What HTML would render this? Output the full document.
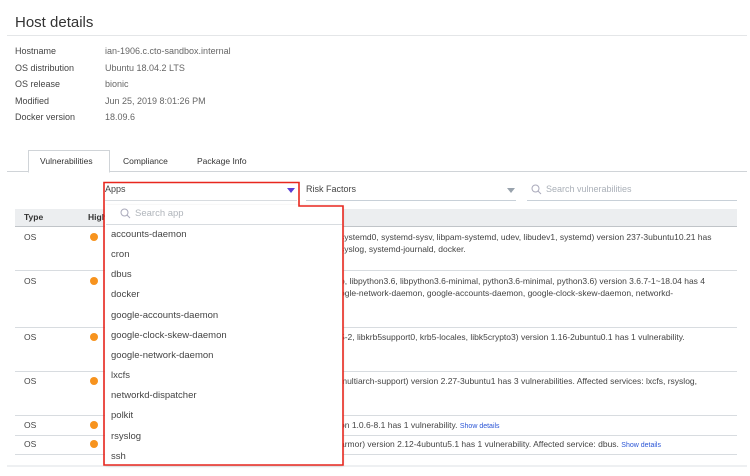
<!DOCTYPE html>
<html><head><meta charset="utf-8"><style>
body{margin:0;width:750px;height:476px;background:#fff;position:relative;overflow:hidden;font-family:"Liberation Sans",sans-serif;color:#444}
.a{position:absolute;white-space:nowrap;line-height:1}
.s{font-size:8.5px}
.d{font-size:9px}
.l{position:absolute;height:1px;background:#d8dce0}
.dot{position:absolute;width:8px;height:8px;border-radius:50%;background:#f7931e}
.it{position:absolute;left:111px;font-size:9.5px;color:#444;white-space:nowrap;line-height:1}
.sd{color:#2a55d6;font-size:7px}
</style></head><body>
<div class="a" style="left:15px;top:15px;font-size:15px;color:#333">Host details</div>
<div class="l" style="left:7px;top:35px;width:740px;background:#e4e6e8"></div>
<div class="a d" style="left:15px;top:47px">Hostname</div><div class="a d" style="left:105px;top:47px;color:#666">ian-1906.c.cto-sandbox.internal</div>
<div class="a d" style="left:15px;top:64px">OS distribution</div><div class="a d" style="left:105px;top:64px;color:#666">Ubuntu 18.04.2 LTS</div>
<div class="a d" style="left:15px;top:80px">OS release</div><div class="a d" style="left:105px;top:80px;color:#666">bionic</div>
<div class="a d" style="left:15px;top:97px">Modified</div><div class="a d" style="left:105px;top:97px;color:#666">Jun 25, 2019 8:01:26 PM</div>
<div class="a d" style="left:15px;top:113px">Docker version</div><div class="a d" style="left:105px;top:113px;color:#666">18.09.6</div>

<div class="l" style="left:7px;top:171px;width:740px;background:#d0d4d8"></div>
<div style="position:absolute;left:28px;top:150px;width:80px;height:21px;border:1px solid #d0d4d8;border-bottom:1px solid #fff;background:#fff"></div>
<div class="a" style="left:40px;top:157px;font-size:8.5px;color:#333">Vulnerabilities</div>
<div class="a" style="left:123px;top:157px;font-size:8.5px;color:#333">Compliance</div>
<div class="a" style="left:197px;top:157px;font-size:8.5px;color:#333">Package Info</div>

<div class="a" style="left:105px;top:185px;font-size:9px;color:#444">Apps</div>
<div class="l" style="left:105px;top:200px;width:192px"></div>
<svg style="position:absolute;left:286px;top:187px" width="10" height="7"><path d="M1 1h8L5 6z" fill="#5b3fd6"/></svg>
<div class="a" style="left:306px;top:185px;font-size:9px;color:#444">Risk Factors</div>
<div class="l" style="left:306px;top:200px;width:210px;background:#c8d0d8"></div>
<svg style="position:absolute;left:506px;top:187px" width="10" height="7"><path d="M1 1h8L5 6z" fill="#99a3ad"/></svg>
<svg style="position:absolute;left:531px;top:184px" width="11" height="11"><circle cx="4.5" cy="4.5" r="3.5" fill="none" stroke="#aab" stroke-width="1"/><path d="M7 7l3 3" stroke="#aab"/></svg>
<div class="a" style="left:546px;top:185px;font-size:9px;color:#aab0b8">Search vulnerabilities</div>
<div class="l" style="left:527px;top:200px;width:210px;background:#c8d0d8"></div>

<div style="position:absolute;left:15px;top:209px;width:722px;height:17px;background:#eceef0;border-bottom:1px solid #c0c4c8"></div>
<div class="a" style="left:24px;top:213px;font-size:8.5px;color:#333;font-weight:bold">Type</div>
<div class="a" style="left:88px;top:213px;font-size:8.5px;color:#333;font-weight:bold">High</div>

<div class="a s" style="left:24px;top:233px">OS</div><div class="dot" style="left:90px;top:233px"></div>
<div class="a s" style="left:340px;top:233px">systemd0, systemd-sysv, libpam-systemd, udev, libudev1, systemd) version 237-3ubuntu10.21 has</div>
<div class="a s" style="left:340px;top:245px">syslog, systemd-journald, docker.</div>
<div class="l" style="left:15px;top:270px;width:722px"></div>
<div class="a s" style="left:24px;top:277px">OS</div><div class="dot" style="left:90px;top:277px"></div>
<div class="a s" style="left:340px;top:277px">p, libpython3.6, libpython3.6-minimal, python3.6-minimal, python3.6) version 3.6.7-1~18.04 has 4</div>
<div class="a s" style="left:340px;top:289px">ogle-network-daemon, google-accounts-daemon, google-clock-skew-daemon, networkd-</div>
<div class="l" style="left:15px;top:327px;width:722px"></div>
<div class="a s" style="left:24px;top:333px">OS</div><div class="dot" style="left:90px;top:333px"></div>
<div class="a s" style="left:340px;top:333px">5-2, libkrb5support0, krb5-locales, libk5crypto3) version 1.16-2ubuntu0.1 has 1 vulnerability.</div>
<div class="l" style="left:15px;top:371px;width:722px"></div>
<div class="a s" style="left:24px;top:377px">OS</div><div class="dot" style="left:90px;top:377px"></div>
<div class="a s" style="left:340px;top:377px">multiarch-support) version 2.27-3ubuntu1 has 3 vulnerabilities. Affected services: lxcfs, rsyslog,</div>
<div class="l" style="left:15px;top:415px;width:722px"></div>
<div class="a s" style="left:24px;top:421px">OS</div><div class="dot" style="left:90px;top:421px"></div>
<div class="a s" style="left:340px;top:421px">on 1.0.6-8.1 has 1 vulnerability. <span class="sd">Show details</span></div>
<div class="l" style="left:15px;top:435px;width:722px"></div>
<div class="a s" style="left:24px;top:440px">OS</div><div class="dot" style="left:90px;top:440px"></div>
<div class="a s" style="left:340px;top:440px">armor) version 2.12-4ubuntu5.1 has 1 vulnerability. Affected service: dbus. <span class="sd">Show details</span></div>
<div class="l" style="left:15px;top:454px;width:722px"></div>
<div class="l" style="left:7px;top:465px;width:740px;height:2px;background:#eef0f2"></div>

<div style="position:absolute;left:105px;top:205px;width:238px;height:260px;background:#fff;box-shadow:0 1px 3px rgba(0,0,0,.15)"></div>
<svg style="position:absolute;left:120px;top:208px" width="11" height="11"><circle cx="4.5" cy="4.5" r="3.5" fill="none" stroke="#aab" stroke-width="1"/><path d="M7 7l3 3" stroke="#aab"/></svg>
<div class="a" style="left:135px;top:209px;font-size:9.5px;color:#b0b5bb">Search app</div>
<div class="l" style="left:106px;top:224px;width:236px;background:#d8dce0"></div>
<div class="it" style="top:230px">accounts-daemon</div>
<div class="it" style="top:250px">cron</div>
<div class="it" style="top:270px">dbus</div>
<div class="it" style="top:290px">docker</div>
<div class="it" style="top:311px">google-accounts-daemon</div>
<div class="it" style="top:331px">google-clock-skew-daemon</div>
<div class="it" style="top:351px">google-network-daemon</div>
<div class="it" style="top:371px">lxcfs</div>
<div class="it" style="top:391px">networkd-dispatcher</div>
<div class="it" style="top:411px">polkit</div>
<div class="it" style="top:432px">rsyslog</div>
<div class="it" style="top:452px">ssh</div>
<svg style="position:absolute;left:0;top:0" width="750" height="476"><path d="M104 182.5H299V206H343V465H104Z" fill="none" stroke="#e8271e" stroke-width="1.6"/></svg>
</body></html>
